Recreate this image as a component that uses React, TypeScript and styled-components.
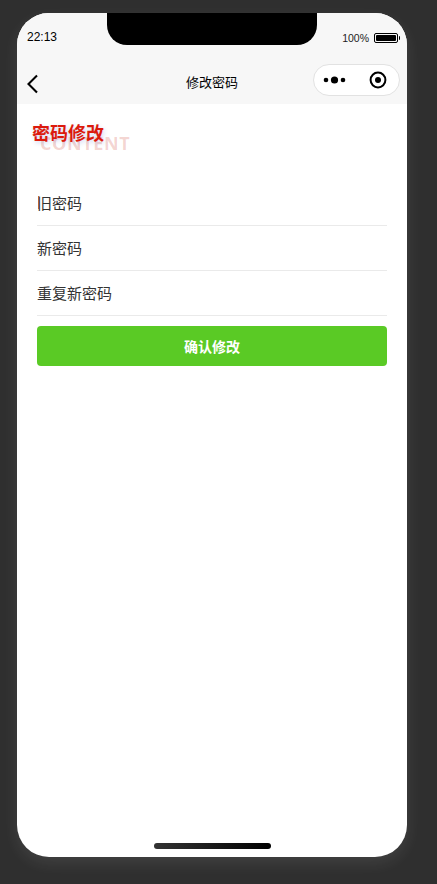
import React from "react";
import styled, { createGlobalStyle } from "styled-components";

const GlobalStyle = createGlobalStyle`
  html, body {
    margin: 0;
    padding: 0;
    height: 100%;
    background: #2f2f2f;
    font-family: "Liberation Sans", "Noto Sans CJK SC", sans-serif;
  }
  * {
    box-sizing: border-box;
  }
`;

const Stage = styled.div`
  width: 100%;
  height: 884px;
  padding: 13px 30px 27px 17px;
  overflow: hidden;
`;

const Phone = styled.div`
  position: relative;
  width: 390px;
  height: 844px;
  background: #fff;
  border-radius: 32px;
  overflow: hidden;
  display: flex;
  flex-direction: column;
`;

const PhoneShadow = styled.div`
  border-radius: 32px;
  width: 390px;
  height: 844px;
  box-shadow: 0 6px 16px rgba(255, 255, 255, 0.09);
`;

const Notch = styled.div`
  position: absolute;
  top: 0;
  left: 90px;
  width: 210px;
  height: 32px;
  background: #000;
  border-radius: 0 0 20px 20px;
`;

const StatusBar = styled.div`
  height: 47px;
  background: #f7f7f7;
  display: flex;
  justify-content: space-between;
  align-items: flex-start;
  padding: 17px 8px 0 10px;
  font-size: 12px;
  color: #000;
`;

const StatusRight = styled.div`
  display: flex;
  align-items: center;
  gap: 5px;
  padding-top: 2px;
  font-size: 10.5px;
  color: #222;
`;

const BatteryBody = styled.div`
  width: 24px;
  height: 10px;
  margin-right: 1px;
  border: 1px solid #000;
  border-radius: 2px;
  padding: 1px;
  position: relative;
  &::before {
    content: "";
    display: block;
    height: 100%;
    background: #000;
    border-radius: 1px;
  }
  &::after {
    content: "";
    position: absolute;
    right: -3px;
    top: 2px;
    width: 1.5px;
    height: 4px;
    background: #000;
    border-radius: 0 1px 1px 0;
  }
`;

const NavBar = styled.div`
  height: 44px;
  background: #f7f7f7;
  display: flex;
  align-items: center;
  justify-content: space-between;
  padding: 0 7px 0 9px;
  position: relative;
`;

const BackIcon = styled.svg`
  margin-top: 4px;
`;

const NavTitle = styled.div`
  position: absolute;
  left: 0;
  right: 0;
  top: 14px;
  text-align: center;
  font-size: 13px;
  line-height: 18px;
  color: #000;
`;

const Capsule = styled.div`
  width: 87px;
  height: 32px;
  margin-top: -4px;
  background: #fff;
  border: 1px solid #e2e2e2;
  border-radius: 16px;
  display: flex;
  align-items: center;
  justify-content: space-between;
  padding: 0 12px 0 9px;
`;

const Content = styled.div`
  flex: 1;
  padding: 0 20px;
`;

const TitleWrap = styled.div`
  position: relative;
  height: 77px;
  margin-left: -5px;
  padding-top: 18px;
`;

const Title = styled.h2`
  position: relative;
  z-index: 1;
  margin: 0;
  font-size: 18px;
  line-height: 24px;
  font-weight: 700;
  color: #dc1a0c;
  text-shadow: 1px 2px 4px rgba(80, 100, 200, 0.25);
`;

const Watermark = styled.span`
  position: absolute;
  left: 8px;
  top: 27px;
  font-size: 18px;
  line-height: 24px;
  letter-spacing: 0.6px;
  font-family: "Open Sans", sans-serif;
  font-weight: 700;
  color: rgba(200, 40, 20, 0.2);
`;

const FieldList = styled.div`
  display: flex;
  flex-direction: column;
`;

const Field = styled.div`
  height: 45px;
  padding-bottom: 2px;
  border-bottom: 1px solid #eaeaea;
  display: flex;
  align-items: center;
  font-size: 15px;
  color: #333;
`;

const Caret = styled.span`
  width: 1px;
  height: 13px;
  margin-left: 1px;
  margin-right: -2px;
  background: #c77a2a;
`;

const SubmitButton = styled.button`
  display: block;
  width: 100%;
  height: 40px;
  margin-top: 10px;
  background: #5aca25;
  border: none;
  border-radius: 4px;
  color: #fff;
  font-family: inherit;
  font-size: 14px;
  font-weight: 700;
`;

const HomeBar = styled.div`
  position: absolute;
  left: 137px;
  bottom: 8px;
  width: 117px;
  height: 6px;
  border-radius: 3px;
  background: linear-gradient(90deg, #333, #000);
`;

export default function App() {
  return (
    <>
      <GlobalStyle />
      <Stage>
        <PhoneShadow>
          <Phone>
            <StatusBar>
              <span>22:13</span>
              <StatusRight>
                <span>100%</span>
                <BatteryBody />
              </StatusRight>
            </StatusBar>
            <NavBar>
              <BackIcon width="14" height="20" viewBox="0 0 14 20" fill="none">
                <path d="M11 1.5 2.5 10l8.5 8.5" stroke="#000" strokeWidth="2.1" />
              </BackIcon>
              <NavTitle>修改密码</NavTitle>
              <Capsule>
                <svg width="23" height="8" viewBox="0 0 23 8" fill="#000">
                  <circle cx="3" cy="4" r="2.3" />
                  <circle cx="11.5" cy="4" r="3.6" />
                  <circle cx="20" cy="4" r="2.3" />
                </svg>
                <svg width="18" height="18" viewBox="0 0 18 18" fill="none">
                  <circle cx="9" cy="9" r="7.4" stroke="#000" strokeWidth="2" />
                  <circle cx="9" cy="9" r="3" fill="#000" />
                </svg>
              </Capsule>
            </NavBar>
            <Content>
              <TitleWrap>
                <Watermark>CONTENT</Watermark>
                <Title>密码修改</Title>
              </TitleWrap>
              <FieldList>
                <Field>
                  <Caret />
                  旧密码
                </Field>
                <Field>新密码</Field>
                <Field>重复新密码</Field>
              </FieldList>
              <SubmitButton>确认修改</SubmitButton>
            </Content>
            <Notch />
            <HomeBar />
          </Phone>
        </PhoneShadow>
      </Stage>
    </>
  );
}
